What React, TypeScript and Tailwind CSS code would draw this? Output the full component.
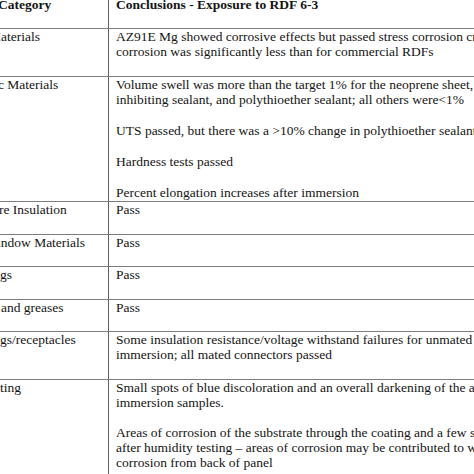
import React from 'react';

type Row = {
  category: string;
  shift: string;
  pad: string;
  paras: string[][];
  gap?: string;
};

const rows: Row[] = [
  {
    category: 'Materials',
    shift: 'ml-[-11px]',
    pad: 'pb-[17px]',
    paras: [[
      'AZ91E Mg showed corrosive effects but passed stress corrosion cracking tests;',
      'corrosion was significantly less than for commercial RDFs',
    ]],
  },
  {
    category: 'c Materials',
    shift: 'ml-[-2px]',
    pad: 'pb-[1px]',
    gap: 'mt-[16px]',
    paras: [
      [
        'Volume swell was more than the target 1% for the neoprene sheet, corrosion',
        'inhibiting sealant, and polythioether sealant; all others were<1%',
      ],
      ['UTS passed, but there was a >10% change in polythioether sealant'],
      ['Hardness tests passed'],
      ['Percent elongation increases after immersion'],
    ],
  },
  { category: 're Insulation', shift: 'ml-[-1px]', pad: 'pb-[17px]', paras: [['Pass']] },
  { category: 'indow Materials', shift: 'ml-[-3px]', pad: 'pb-[16px]', paras: [['Pass']] },
  { category: 'gs', shift: 'ml-0', pad: 'pb-[17px]', paras: [['Pass']] },
  { category: 'and greases', shift: 'ml-[1px]', pad: 'pb-[16px]', paras: [['Pass']] },
  {
    category: 'gs/receptacles',
    shift: 'ml-0',
    pad: 'pb-[17px]',
    paras: [[
      'Some insulation resistance/voltage withstand failures for unmated connectors after',
      'immersion; all mated connectors passed',
    ]],
  },
  {
    category: 'ting',
    shift: 'ml-0',
    pad: 'pb-[17px]',
    gap: 'mt-[15px]',
    paras: [
      [
        'Small spots of blue discoloration and an overall darkening of the anodized',
        'immersion samples.',
      ],
      [
        'Areas of corrosion of the substrate through the coating and a few spots of rust',
        'after humidity testing – areas of corrosion may be contributed to water intrusion',
        'corrosion from back of panel',
      ],
    ],
  },
];

export default function App() {
  return (
    <div className="w-[474px] h-[474px] overflow-hidden bg-white text-[#141414] font-['Liberation_Serif',serif] text-[13.5px] leading-[15px]">
      <div className="mt-[-3px] flex flex-col">
        <div className="flex border-b border-[#7d7d7d]">
          <div className="w-[109px] shrink-0 overflow-hidden border-r border-[#5e5e5e] pb-[16px]">
            <div className="ml-[-2px] whitespace-nowrap font-bold">Category</div>
          </div>
          <div className="flex-1 overflow-hidden pl-[7px] pb-[16px]">
            <div className="whitespace-nowrap font-bold">Conclusions - Exposure to RDF 6-3</div>
          </div>
        </div>

        {rows.map((row, i) => (
          <div key={i} className="flex border-b border-[#7d7d7d] last:border-b-0">
            <div className={`w-[109px] shrink-0 overflow-hidden border-r border-[#5e5e5e] ${row.pad}`}>
              <div className={`whitespace-nowrap ${row.shift}`}>{row.category}</div>
            </div>
            <div className={`flex-1 overflow-hidden pl-[7px] ${row.pad}`}>
              {row.paras.map((lines, j) => (
                <div key={j} className={j > 0 ? row.gap : ''}>
                  {lines.map((line, k) => (
                    <div key={k} className="whitespace-nowrap">
                      {line}
                    </div>
                  ))}
                </div>
              ))}
            </div>
          </div>
        ))}
        <div className="flex h-[40px]">
          <div className="w-[109px] shrink-0 border-r border-[#5e5e5e]" />
        </div>
      </div>
    </div>
  );
}
